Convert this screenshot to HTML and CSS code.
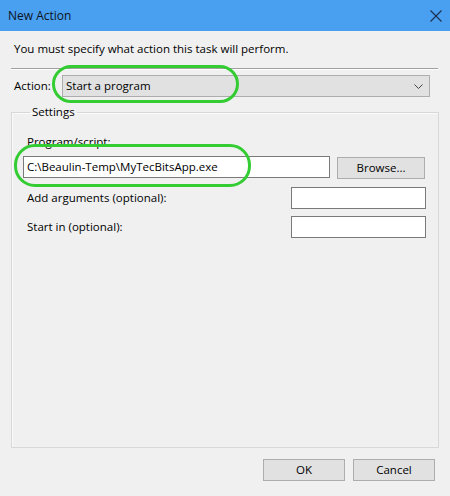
FILE: index.html
```html
<!DOCTYPE html>
<html>
<head>
<meta charset="utf-8">
<title>New Action</title>
<link rel="stylesheet" href="styles.css">
</head>
<body>
<div class="window">
  <div class="titlebar">
    <span class="title">New Action</span>
    <svg class="close" width="12" height="12" viewBox="0 0 12 12"><path d="M0.5 0.5 L11.5 11.5 M11.5 0.5 L0.5 11.5" stroke="#1d2d4c" stroke-width="1.1" fill="none"/></svg>
  </div>
  <div class="content">
    <p class="intro">You must specify what action this task will perform.</p>
    <div class="sep"></div>
    <div class="action-row">
      <span class="action-label">Action:</span>
      <div class="select">
        <span>Start a program</span>
        <svg class="chev" width="9" height="5" viewBox="0 0 9 5"><path d="M0.5 0.5 L4.5 4.5 L8.5 0.5" stroke="#444" stroke-width="1" fill="none"/></svg>
      </div>
    </div>
    <fieldset class="settings">
      <legend>Settings</legend>
      <div class="field-label">Program/script:</div>
      <div class="prog-row">
        <div class="input prog-input">C:\Beaulin-Temp\MyTecBitsApp.exe</div>
        <div class="btn browse">Browse...</div>
      </div>
      <div class="opt-row first">
        <span class="field-label-inline">Add arguments (optional):</span>
        <div class="input short"></div>
      </div>
      <div class="opt-row">
        <span class="field-label-inline">Start in (optional):</span>
        <div class="input short"></div>
      </div>
    </fieldset>
    <div class="footer">
      <div class="btn">OK</div>
      <div class="btn">Cancel</div>
    </div>
  </div>
  <div class="mark mark-action"></div>
  <div class="mark mark-prog"></div>
</div>
</body>
</html>
```
FILE: styles.css
```css
* { box-sizing: border-box; }
html, body { margin: 0; padding: 0; }
body {
  background: #f0f0f0;
  font-family: "Open Sans", "Noto Sans", sans-serif;
  font-size: 11.5px;
  color: #000;
}
.window {
  position: relative;
  width: 450px;
  height: 496px;
  display: flex;
  flex-direction: column;
  background: #f0f0f0;
  overflow: hidden;
}
.titlebar {
  height: 31px;
  flex: none;
  background: #4aa0f0;
  display: flex;
  align-items: center;
  justify-content: space-between;
  padding: 0 8px 0 8px;
}
.title { font-size: 12px; color: #0c1424; }
.close { margin-right: 0; }
.content {
  flex: 1;
  display: flex;
  flex-direction: column;
  padding: 10px 0 15px 0;
}
.intro {
  margin: 0 0 0 14px;
  line-height: 16px;
  height: 16px;
}
.sep {
  margin: 11px 12px 0 11px;
  height: 2px;
  border-top: 1px solid #a0a0a0;
  border-bottom: 1px solid #ffffff;
}
.action-row {
  margin-top: 5px;
  display: flex;
  align-items: center;
  padding-left: 14px;
}
.action-label { width: 48px; line-height: 16px; }
.select {
  width: 368px;
  height: 22px;
  background: #e1e1e1;
  border: 1px solid #adadad;
  display: flex;
  align-items: center;
  justify-content: space-between;
  padding: 0 6px 0 3px;
  line-height: 16px;
}
.chev { margin-top: 1px; }
.settings {
  flex: 1;
  margin: 7px 11px 0 11px;
  padding: 0 12px 0 11px;
  border: 1px solid #d8d8d8;
  box-shadow: inset 1px 1px 0 #fafafa;
  min-width: 0;
}
.settings legend {
  margin-left: 7px;
  padding: 0 2px;
  line-height: 16px;
  height: 16px;
}
.field-label {
  margin-top: 14px;
  padding-left: 4px;
  line-height: 16px;
  height: 16px;
}
.prog-row {
  margin-top: 6px;
  display: flex;
  gap: 7px;
}
.input {
  height: 22px;
  background: #fff;
  border: 1px solid #7a7a7a;
  line-height: 20px;
  padding-left: 3px;
  white-space: nowrap;
}
.prog-input { width: 307px; }
.browse {
  width: 88px;
  height: 22px;
  border: 2px solid #3f6aa8;
  margin-top: 1px;
}
.opt-row {
  margin-top: 7px;
  display: flex;
  align-items: center;
  justify-content: space-between;
  padding-left: 4px;
}
.opt-row.first { margin-top: 8px; }
.field-label-inline { line-height: 16px; }
.short { width: 135px; }
.btn {
  background: #e1e1e1;
  border: 1px solid #adadad;
  display: flex;
  align-items: center;
  justify-content: center;
  line-height: 16px;
}
.footer {
  margin-top: 11px;
  display: flex;
  justify-content: flex-end;
  gap: 8px;
  padding-right: 15px;
}
.footer .btn { width: 82px; height: 22px; }
.mark {
  position: absolute;
  border: 3px solid #33cc33;
}
.mark-action {
  left: 52px; top: 65px; width: 187px; height: 38px;
  border-radius: 19px;
}
.mark-prog {
  left: 14px; top: 144px; width: 237px; height: 43px;
  border-radius: 21px;
}
```
